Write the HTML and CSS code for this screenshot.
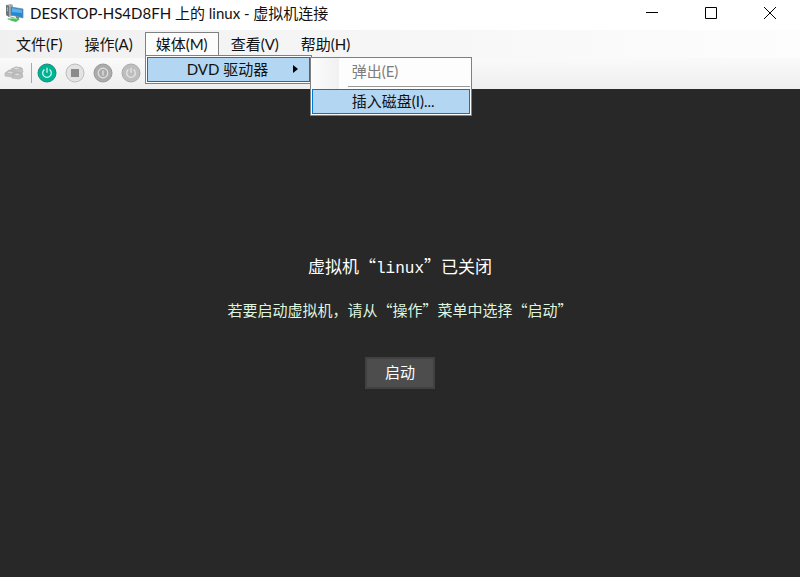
FILE: index.html
```html
<!DOCTYPE html>
<html lang="zh-CN">
<head>
  <meta charset="UTF-8">
  <title>DESKTOP-HS4D8FH 上的 linux - 虚拟机连接</title>
  <meta name="viewport" content="width=device-width, initial-scale=1.0">
  <link rel="stylesheet" href="styles.css">
</head>
<body>
  <header class="titlebar">
    <svg class="app-icon" width="20" height="20" viewBox="0 0 20 20" aria-hidden="true">
      <path d="M1 2l5-1 2 1v11l-4 1-3-2z" fill="#a3adb3"/>
      <path d="M1 2l3 1v11l-3-2z" fill="#6c767d"/>
      <path d="M2 5l1 .4M2 7l1 .4" stroke="#d8e4ea"/>
      <path d="M6 4l12 2v9L6 12z" fill="#2688d4"/>
      <path d="M7 5l10 2v3L7 9z" fill="#55b4ee"/>
      <path d="M6 4l12 2v9L6 12z" fill="none" stroke="#74828d" stroke-width=".7"/>
      <path d="M11 13l3 1v2l-3-1z" fill="#74828d"/>
      <path d="M2 16l5-2 8 2-4 3-4-1z" fill="#49bd62"/>
      <path d="M4 16l4-1 4 1" stroke="#a8e6ad" fill="none"/>
    </svg>
    <h1 class="title">DESKTOP-HS4D8FH 上的 linux - 虚拟机连接</h1>
    <div class="window-buttons">
      <button type="button" aria-label="最小化"><svg width="12" height="12" viewBox="0 0 12 12"><path d="M0 5.5h12"/></svg></button>
      <button type="button" aria-label="最大化"><svg width="12" height="12" viewBox="0 0 12 12"><path d="M.5 .5h11v11H.5z"/></svg></button>
      <button type="button" aria-label="关闭"><svg width="12" height="12" viewBox="0 0 12 12"><path d="M0 0l12 12M12 0L0 12"/></svg></button>
    </div>
  </header>

  <nav class="menubar">
    <button type="button" class="menu-title">文件(F)</button>
    <button type="button" class="menu-title">操作(A)</button>
    <div class="menu">
      <button type="button" class="menu-title open" aria-expanded="true">媒体(M)</button>
      <div class="dropdown">
        <button type="button" class="menu-item selected" aria-expanded="true">
          <span>DVD 驱动器</span>
          <svg class="arrow" width="5" height="8" viewBox="0 0 5 8"><path d="M0 0l5 4-5 4z"/></svg>
        </button>
        <div class="submenu">
          <button type="button" class="menu-item" disabled>弹出(E)</button>
          <hr class="separator">
          <button type="button" class="menu-item selected">插入磁盘(I)...</button>
        </div>
      </div>
    </div>
    <button type="button" class="menu-title">查看(V)</button>
    <button type="button" class="menu-title">帮助(H)</button>
  </nav>

  <div class="toolbar">
    <button type="button" class="tool keys" aria-label="Ctrl+Alt+Delete" disabled>
      <svg width="20" height="20" viewBox="0 0 20 20" stroke="#b2b2b2" stroke-width=".7">
        <path d="M7 6l5-2 6 1 1 4-4 3-7-2z" fill="#c4c4c4"/>
        <path d="M8 6l4-2 5 1-4 2z" fill="#dadada"/>
        <path d="M1 10l4-3 6 1 1 4-4 2-7-1z" fill="#c4c4c4"/>
        <path d="M2 10l3-2 5 1-3 2z" fill="#dcdcdc"/>
        <path d="M8 12l4-3 6 1 1 4-4 2-7-1z" fill="#c0c0c0"/>
        <path d="M9 12l4-2 4 1-3 2z" fill="#dcdcdc"/>
      </svg>
    </button>
    <span class="divider"></span>
    <button type="button" class="tool" aria-label="启动">
      <svg width="20" height="20" viewBox="0 0 20 20" fill="none">
        <circle cx="10" cy="10" r="9" fill="#00b294" stroke="#168b77"/>
        <path d="M7.4 6.6a4.3 4.3 0 1 0 5.2 0M10 4.8v5" stroke="#d9fff7" stroke-width="1.2"/>
      </svg>
    </button>
    <button type="button" class="tool" aria-label="强行关闭" disabled>
      <svg width="20" height="20" viewBox="0 0 20 20">
        <circle cx="10" cy="10" r="9" fill="#e3e3e3" stroke="#bcbcbc"/>
        <path d="M6 6h8v8H6z" fill="#8b8b8b"/>
      </svg>
    </button>
    <button type="button" class="tool" aria-label="关机" disabled>
      <svg width="20" height="20" viewBox="0 0 20 20" fill="none">
        <circle cx="10" cy="10" r="9" fill="#ababab" stroke="#999"/>
        <circle cx="10" cy="10" r="4.8" stroke="#e2e2e2" stroke-width="1.2"/>
        <path d="M10 7.5v5" stroke="#e2e2e2" stroke-width="1.3"/>
      </svg>
    </button>
    <button type="button" class="tool" aria-label="保存" disabled>
      <svg width="20" height="20" viewBox="0 0 20 20" fill="none">
        <circle cx="10" cy="10" r="9" fill="#bebebe" stroke="#aaa"/>
        <path d="M7.4 6.6a4.3 4.3 0 1 0 5.2 0M10 4.8v5" stroke="#e6e6e6" stroke-width="1.3"/>
      </svg>
    </button>
  </div>

  <main class="screen">
    <h2 class="status">虚拟机“<span class="vm-name">linux</span>”已关闭</h2>
    <p class="hint">若要启动虚拟机，请从“操作”菜单中选择“启动”</p>
    <button type="button" class="start">启动</button>
  </main>
</body>
</html>
```
FILE: styles.css
```css
* { box-sizing: border-box; }
body {
  margin: 0;
  min-height: 100vh;
  display: flex;
  flex-direction: column;
  font: 15px/20px Lato, "Noto Sans CJK SC", sans-serif;
  color: #111;
  background: #282828;
}
button {
  margin: 0;
  padding: 0;
  border: none;
  background: none;
  font: inherit;
  color: inherit;
}
svg { display: block; }

.titlebar {
  display: flex;
  align-items: center;
  height: 30px;
  padding: 0 1px 4px 5px;
  background: #fff;
}
.title {
  flex: 1;
  margin: 0 0 0 5px;
  font-size: 15px;
  font-weight: normal;
  white-space: nowrap;
}
.window-buttons { display: flex; }
.window-buttons button {
  display: grid;
  place-items: center;
  width: 59px;
  height: 26px;
}
.window-buttons path {
  fill: none;
  stroke: #000;
}

.menubar {
  display: flex;
  gap: 2px;
  height: 28px;
  padding-left: 6px;
  background: linear-gradient(90deg, #f0f0f0, #fdfdfd);
}
.menu { position: relative; }
.menu-title {
  height: 28px;
  padding: 0 10px;
  white-space: nowrap;
}
.menu-title.open {
  margin-top: 2px;
  height: 26px;
  padding-bottom: 4px;
  border: 1px solid #808080;
  border-bottom: none;
  background: #fcfcfc;
}
.dropdown,
.submenu {
  position: absolute;
  z-index: 1;
  padding: 1px;
  border: 1px solid #808080;
  background: #fdfdfd;
}
.dropdown {
  top: 25px;
  left: 0;
  width: 167px;
}
.submenu {
  top: 1px;
  left: 164px;
  width: 162px;
  background: linear-gradient(90deg, #fcfcfc, #f1f1f1 28px, #fdfdfd 28px);
}
.menu-item {
  display: flex;
  align-items: center;
  justify-content: space-between;
  width: 100%;
  height: 25px;
  padding: 0 11px 2px 39px;
  border: 1px solid transparent;
  white-space: nowrap;
}
.menu-item:disabled { color: #7d7d7d; }
.menu-item.selected {
  border-color: #0078d7;
  background: #b3d7f3;
}
.separator {
  margin: 2px 0 2px 36px;
  border: none;
  border-top: 1px solid #999;
}

.toolbar {
  display: flex;
  align-items: center;
  gap: 8px;
  height: 31px;
  padding: 0 0 2px 4px;
  background: linear-gradient(#fafafa, #eee);
}
.tool.keys { margin-right: -1px; }
.divider {
  width: 1px;
  height: 20px;
  margin-right: -3px;
  background: #a8a8a8;
}

.screen {
  flex: 1;
  display: flex;
  flex-direction: column;
  align-items: center;
  padding-top: 165px;
  color: #fff;
  font-family: "Noto Sans CJK SC", sans-serif;
}
.status {
  margin: 0;
  font-size: 17px;
  line-height: 24px;
  font-weight: normal;
}
.vm-name {
  font-family: "Liberation Mono", monospace;
  font-size: 16px;
}
.hint {
  margin: 20px 0 38px;
  line-height: 18px;
  color: #dff5df;
}
.start {
  width: 70px;
  height: 32px;
  padding-bottom: 2px;
  border: 2px solid #414141;
  background: #4d4d4d;
}
```
